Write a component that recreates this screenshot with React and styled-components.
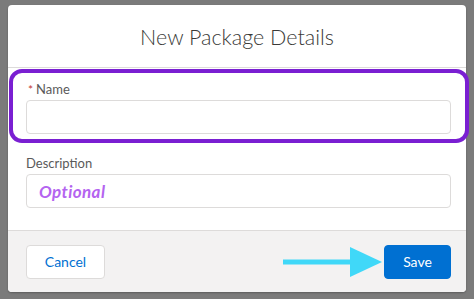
import styled, { createGlobalStyle } from "styled-components";

const GlobalStyle = createGlobalStyle`
  html, body {
    margin: 0;
    padding: 0;
    background: #7b7b7b;
  }
  * { box-sizing: border-box; }
`

const Page = styled.div`
  width: 474px;
  height: 299px;
  padding: 5px 8px 7px 8px;
  background: #7b7b7b;
  font-family: Lato, "Open Sans", sans-serif;
`

const Modal = styled.div`
  width: 458px;
  height: 287px;
  background: #fff;
  border-radius: 4px;
  display: flex;
  flex-direction: column;
  box-shadow: 0 1px 2px rgba(0, 0, 0, 0.25);
`

const Header = styled.div`
  height: 63px;
  border-bottom: 1px solid #dddbda;
  display: flex;
  align-items: center;
  justify-content: center;
  padding-top: 2px;
`

const Title = styled.h2`
  margin: 0;
  font-size: 21.5px;
  font-weight: 300;
  color: #3a3a38;
`

const Body = styled.div`
  flex: 1;
  padding: 1px 0 0 0;
`

const Highlight = styled.div`
  margin-left: 1px;
  margin-right: -3px;
  height: 74px;
  border: 4px solid #7a1fd2;
  border-radius: 13px;
  padding: 7px 14px 0 13px;
`

const Field = styled.div`
  padding: 11px 15px 0 18px;
`

const Label = styled.label`
  display: block;
  height: 18px;
  line-height: 18px;
  margin-bottom: 2px;
  font-size: 13px;
  color: #5a5a5a;
  padding-left: ${p => p.$required ? "2px" : "0"};
`

const Star = styled.span`
  color: #c23934;
  font-size: 12px;
  margin-right: 3px;
`

const Input = styled.div`
  width: 425px;
  height: 34px;
  border: 1px solid #dddbda;
  border-radius: 4px;
  background: #fff;
  display: flex;
  align-items: center;
  padding-left: 12px;
`

const Hint = styled.span`
  font-family: Lato, sans-serif;
  font-style: italic;
  font-weight: bold;
  font-size: 17px;
  color: #b464f0;
  letter-spacing: 0.4px;
`

const Footer = styled.div`
  height: 62px;
  background: #f3f2f2;
  border-top: 1px solid #dddbda;
  border-radius: 0 0 4px 4px;
  display: flex;
  align-items: center;
  justify-content: space-between;
  padding: 0 15px 0 18px;
`

const Right = styled.div`
  display: flex;
  align-items: center;
  gap: 1px;
`

const Button = styled.button`
  height: 34px;
  padding: 0;
  width: ${p => p.$primary ? "67px" : "79px"};
  border-radius: 4px;
  border: 1px solid ${p => p.$primary ? "#0070d2" : "#dddbda"};
  background: ${p => p.$primary ? "#0070d2" : "#fff"};
  color: ${p => p.$primary ? "#fff" : "#0070d2"};
  font-family: Lato, "Open Sans", sans-serif;
  font-size: 14px;
`

function Arrow() {
  return (
    <svg width="100" height="32" viewBox="0 0 100 32">
      <rect x="0" y="13.5" width="70" height="5" fill="#40d8f8" />
      <polygon points="67,1 99,16 67,31" fill="#40d8f8" />
    </svg>
  )
}

export default function App() {
  return (
    <Page>
      <GlobalStyle />
      <Modal>
        <Header>
          <Title>New Package Details</Title>
        </Header>
        <Body>
          <Highlight>
            <Label $required><Star>*</Star>Name</Label>
            <Input />
          </Highlight>
          <Field>
            <Label>Description</Label>
            <Input><Hint>Optional</Hint></Input>
          </Field>
        </Body>
        <Footer>
          <Button>Cancel</Button>
          <Right>
            <Arrow />
            <Button $primary>Save</Button>
          </Right>
        </Footer>
      </Modal>
    </Page>
  )
}
